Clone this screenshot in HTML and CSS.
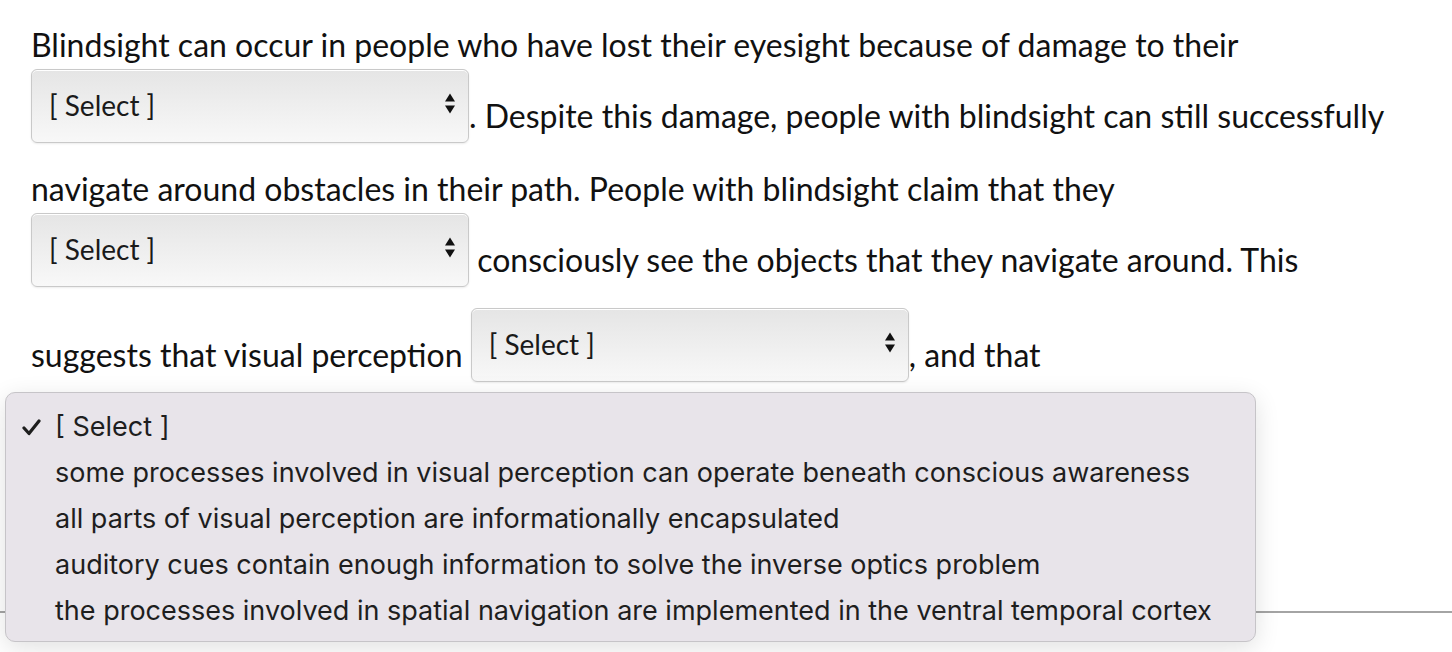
FILE: index.html
```html
<!DOCTYPE html>
<html lang="en">
<head>
    <meta charset="UTF-8">
    <title>Blindsight Question</title>
    <link rel="stylesheet" href="styles.css">
</head>
<body>
    <div class="question">
        <p class="question-text">
            Blindsight can occur in people who have lost their eyesight because of damage to their
            <span class="select-box"><span class="select-label">[ Select ]</span><svg class="select-arrows" viewBox="0 0 10 22"><path d="M5 0.5 L10 8.5 L0 8.5 Z M0 12.5 L10 12.5 L5 20.5 Z" fill="#111"/></svg></span>. Despite this damage, people with blindsight can still successfully navigate around obstacles in their path. People with blindsight claim that they
            <span class="select-box"><span class="select-label">[ Select ]</span><svg class="select-arrows" viewBox="0 0 10 22"><path d="M5 0.5 L10 8.5 L0 8.5 Z M0 12.5 L10 12.5 L5 20.5 Z" fill="#111"/></svg></span> consciously see the objects that they navigate around. This suggests that visual perception
            <span class="select-box"><span class="select-label">[ Select ]</span><svg class="select-arrows" viewBox="0 0 10 22"><path d="M5 0.5 L10 8.5 L0 8.5 Z M0 12.5 L10 12.5 L5 20.5 Z" fill="#111"/></svg></span>, and that
        </p>
        <hr class="divider">
    </div>

    <ul class="dropdown-menu">
        <li class="option selected">
            <svg class="check" width="19" height="17" viewBox="0 0 19 17"><path d="M2 9 L7 14.5 L17 2" fill="none" stroke="#1e1e1e" stroke-width="3.2" stroke-linecap="round" stroke-linejoin="round"/></svg>[ Select ]
        </li>
        <li class="option">some processes involved in visual perception can operate beneath conscious awareness</li>
        <li class="option">all parts of visual perception are informationally encapsulated</li>
        <li class="option">auditory cues contain enough information to solve the inverse optics problem</li>
        <li class="option">the processes involved in spatial navigation are implemented in the ventral temporal cortex</li>
    </ul>
</body>
</html>
```

FILE: styles.css
```css
body {
    margin: 0;
    background-color: white;
    font-family: Lato, "Liberation Sans", sans-serif;
    color: #111;
    overflow: hidden;
}

.question {
    padding: 20px 0 0 31px;
}

.question-text {
    margin: 0;
    width: 1390px;
    font-size: 32px;
    line-height: 49px;
}

.select-box {
    display: inline-flex;
    align-items: center;
    position: relative;
    width: 438px;
    height: 74px;
    box-sizing: border-box;
    margin-bottom: 21px;
    padding: 0 0 2px 17px;
    vertical-align: 12px;
    border: 1px solid #c9c9c9;
    border-radius: 6px;
    background: linear-gradient(#e5e5e5, #f8f8f8);
    box-shadow: inset 0 1px 0 #fff, 0 1px 2px rgba(0,0,0,0.08);
    font-size: 28px;
    line-height: 1;
    color: #1a1a1a;
}

.select-arrows {
    position: absolute;
    right: 13px;
    top: 23px;
    width: 10px;
    height: 22px;
}

.divider {
    margin: 208px 0 0 -31px;
    border: none;
    border-top: 2px solid #a4a4a4;
}

.dropdown-menu {
    position: absolute;
    left: 5px;
    top: 392px;
    width: 1251px;
    height: 250px;
    box-sizing: border-box;
    margin: 0;
    padding: 11px 0 0 0;
    list-style: none;
    background-color: #e8e4ea;
    border: 1px solid #c6c4c8;
    border-radius: 10px;
    box-shadow: 0 6px 24px rgba(0,0,0,0.12);
    font-family: Inter, "Noto Sans", sans-serif;
    font-size: 27px;
    color: #1e1e1e;
}

.option {
    height: 46px;
    line-height: 46px;
    padding-left: 49px;
    position: relative;
    white-space: nowrap;
}

.check {
    position: absolute;
    left: 16px;
    top: 15px;
}
```
